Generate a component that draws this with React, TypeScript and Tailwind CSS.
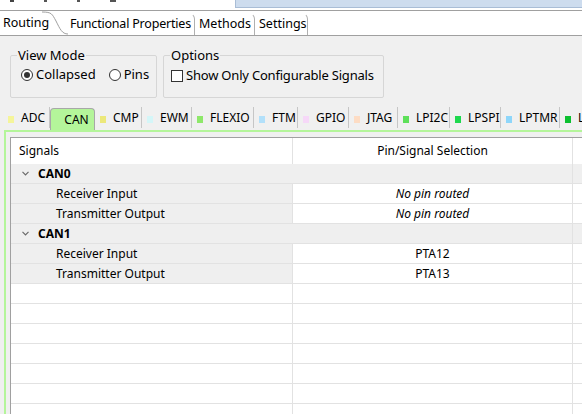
import React from 'react';

// Peripheral tab strip — fixed widths follow the tool's own tab layout
const peripherals = [
  { name: 'ADC', color: 'bg-[#f5f59a]', width: 'w-[47px]' },
  { name: 'CAN', color: 'bg-[#b4f59a]', width: 'w-[45px]', selected: true },
  { name: 'CMP', color: 'bg-[#ece87a]', width: 'w-[47px]' },
  { name: 'EWM', color: 'bg-[#d4f6f8]', width: 'w-[50px]' },
  { name: 'FLEXIO', color: 'bg-[#8ee86a]', width: 'w-[62px]' },
  { name: 'FTM', color: 'bg-[#b2e0fa]', width: 'w-[44px]' },
  { name: 'GPIO', color: 'bg-[#f6d8f8]', width: 'w-[51px]' },
  { name: 'JTAG', color: 'bg-[#fddcc4]', width: 'w-[49px]' },
  { name: 'LPI2C', color: 'bg-[#5ee05a]', width: 'w-[52px]' },
  { name: 'LPSPI', color: 'bg-[#1ed84e]', width: 'w-[51px]' },
  { name: 'LPTMR', color: 'bg-[#8ed6fa]', width: 'w-[59px]' },
  { name: 'LPUART', color: 'bg-[#0cc030]', width: 'w-[60px]' },
];

type Row =
  | { kind: 'group'; label: string }
  | { kind: 'signal'; label: string; pin: string; routed: boolean }
  | { kind: 'empty' };

const rows: Row[] = [
  { kind: 'group', label: 'CAN0' },
  { kind: 'signal', label: 'Receiver Input', pin: 'No pin routed', routed: false },
  { kind: 'signal', label: 'Transmitter Output', pin: 'No pin routed', routed: false },
  { kind: 'group', label: 'CAN1' },
  { kind: 'signal', label: 'Receiver Input', pin: 'PTA12', routed: true },
  { kind: 'signal', label: 'Transmitter Output', pin: 'PTA13', routed: true },
  { kind: 'empty' },
  { kind: 'empty' },
  { kind: 'empty' },
  { kind: 'empty' },
  { kind: 'empty' },
  { kind: 'empty' },
  { kind: 'empty' },
];

const Chevron = () => (
  <svg className="w-[7px] h-[5px] text-[#6a6a6a]" viewBox="0 0 7 5" fill="none" stroke="currentColor">
    <path d="M0.5 0.8 L3.5 3.8 L6.5 0.8" strokeWidth={1.2} />
  </svg>
);

export default function App() {
  return (
    <div
      className="w-[582px] h-[414px] overflow-hidden bg-[#f0f0f0] text-[12px] text-black flex flex-col"
      style={{ fontFamily: '"Noto Sans", "Open Sans", sans-serif' }}
    >
      {/* window strip cut off at the top */}
      <div className="h-[10px] flex bg-white shrink-0">
        <div className="w-[235px] flex items-start gap-[30px] pl-[10px]">
          <div className="w-[4px] h-[2px] bg-[#444]" />
          <div className="w-[3px] h-[2px] bg-[#555]" />
          <div className="w-[3px] h-[2px] bg-[#555]" />
          <div className="w-[6px] h-[2px] bg-[#555]" />
        </div>
        <div className="flex-1 h-[8px] bg-[#cddcee] border-l border-b border-[#a9bdd6]" />
      </div>

      {/* editor page tabs */}
      <div className="h-[26px] shrink-0 flex bg-white border-y border-[#a0a0a0] text-[12.5px] whitespace-nowrap">
        <div className="w-[42px] pl-[3px] flex items-center">Routing</div>
        <svg className="w-[26px] h-[24px] shrink-0" viewBox="0 0 26 24" fill="none">
          <path d="M0 1 C10 1 10 3 14 10 C18 18 20 23 26 23" stroke="#a0a0a0" strokeWidth={1} />
        </svg>
        <div className="w-[127px] pl-[2px] flex items-center tracking-[-0.2px] border-r border-t border-[#b0b0b0] rounded-tr-[6px] mt-[2px] border-t-transparent">
          Functional Properties
        </div>
        <div className="w-[60px] pl-[4px] flex items-center border-r border-t border-[#b0b0b0] rounded-tr-[6px] mt-[2px] border-t-transparent">
          Methods
        </div>
        <div className="w-[53px] pl-[4px] flex items-center border-r border-t border-[#b0b0b0] rounded-tr-[6px] mt-[2px] border-t-transparent">
          Settings
        </div>
      </div>

      {/* view mode / options */}
      <div className="flex gap-[6px] pl-[10px] pt-[11px] shrink-0 text-[13px]">
        <fieldset className="w-[147px] h-[51px] border border-[#d6d6d6] rounded-[2px] px-0">
          <legend className="px-[1px] ml-[6px] leading-[16px]">View Mode</legend>
          <div className="flex items-center mt-[2px] pl-[10px]">
            <span className="w-[12px] h-[12px] rounded-full border border-[#333] bg-white flex items-center justify-center">
              <span className="w-[6px] h-[6px] rounded-full bg-[#333]" />
            </span>
            <span className="ml-[3px]">Collapsed</span>
            <span className="ml-[13px] w-[12px] h-[12px] rounded-full border border-[#333] bg-white" />
            <span className="ml-[3px]">Pins</span>
          </div>
        </fieldset>
        <fieldset className="w-[221px] h-[51px] border border-[#d6d6d6] rounded-[2px] px-0">
          <legend className="px-[1px] ml-[6px] leading-[16px]">Options</legend>
          <div className="flex items-center mt-[3px] pl-[7px] whitespace-nowrap">
            <span className="w-[12px] h-[12px] border border-[#333] bg-white shrink-0" />
            <span className="ml-[3px] tracking-[-0.2px]">Show Only Configurable Signals</span>
          </div>
        </fieldset>
      </div>

      {/* peripheral tabs */}
      <div className="flex items-end h-[23px] mt-[9px] pl-[3px] shrink-0 text-[12px] whitespace-nowrap">
        {peripherals.map((p) =>
          p.selected ? (
            <div
              key={p.name}
              className={`${p.width} h-[22px] shrink-0 flex items-center justify-center pt-[1px] bg-[#b4f59a] border border-b-0 border-[#a8a8a8] rounded-t-[4px]`}
            >
              <span className="ml-[8px]">{p.name}</span>
            </div>
          ) : (
            <div
              key={p.name}
              className={`${p.width} h-[21px] shrink-0 flex items-center pl-[5px] border-r border-[#c6c6c6] mb-[2px]`}
            >
              <span className={`w-[6px] h-[7px] ${p.color} mt-[3px] shrink-0`} />
              <span className="ml-[7px]">{p.name}</span>
            </div>
          ),
        )}
      </div>

      {/* tab content */}
      <div className="flex-1 min-h-0 ml-[4px] border-l-2 border-t-2 border-[#b4f59a] pl-[4px] pt-[5px] overflow-hidden">
        <div className="border-l border-t border-[#a0a0a0] bg-white w-[640px] h-full">
          {/* header */}
          <div className="flex h-[26px]">
            <div className="w-[282px] pl-[8px] flex items-center border-r border-[#e2e2e2]">Signals</div>
            <div className="w-[280px] flex items-center justify-center border-r border-[#e2e2e2]">
              Pin/Signal Selection
            </div>
            <div className="flex-1" />
          </div>

          {rows.map((r, i) => {
            if (r.kind === 'group') {
              return (
                <div key={i} className="flex h-[20px] bg-[#efefef] border-b border-[#e2e2e2]">
                  <div className="w-[282px] flex items-center pl-[11px] font-bold">
                    <Chevron />
                    <span className="ml-[9px]">{r.label}</span>
                  </div>
                  <div className="w-[280px] border-r border-[#e2e2e2]" />
                  <div className="flex-1" />
                </div>
              );
            }
            if (r.kind === 'signal') {
              return (
                <div key={i} className="flex h-[20px] border-b border-[#e2e2e2]">
                  <div className="w-[282px] flex items-center pl-[45px] bg-[#efefef] border-r border-[#e2e2e2]">
                    {r.label}
                  </div>
                  <div
                    className={`w-[280px] flex items-center justify-center border-r border-[#e2e2e2] ${
                      r.routed ? '' : 'italic'
                    }`}
                  >
                    {r.pin}
                  </div>
                  <div className="flex-1" />
                </div>
              );
            }
            return (
              <div key={i} className="flex h-[20px] border-b border-[#e2e2e2]">
                <div className="w-[282px] border-r border-[#e2e2e2]" />
                <div className="w-[280px] border-r border-[#e2e2e2]" />
                <div className="flex-1" />
              </div>
            );
          })}
        </div>
      </div>
    </div>
  );
}
